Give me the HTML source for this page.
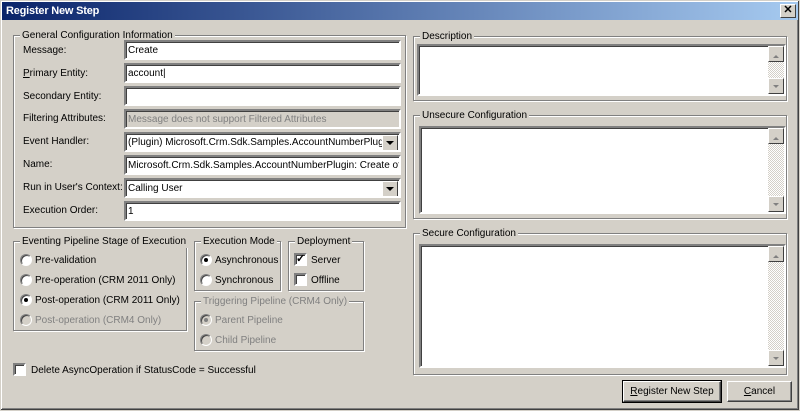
<!DOCTYPE html>
<html><head><meta charset="utf-8"><style>
*{box-sizing:border-box;margin:0;padding:0}
body{width:800px;height:411px;overflow:hidden;background:#d4d0c8;font-family:"Liberation Sans",Arial,sans-serif;font-size:10px;color:#000;position:relative}
.a{position:absolute}
.win{left:0;top:0;width:800px;height:411px;border:1px solid #d4d0c8;box-shadow:inset -1px -1px #404040,inset 1px 1px #fff,inset -2px -2px #808080}
.title{left:2px;top:2px;width:796px;height:18px;background:linear-gradient(to right,#0a246a,#a6caf0);color:#fff;font-weight:bold;font-size:11px;line-height:18px;padding-left:4px;letter-spacing:-0.2px}
.close{left:780px;top:4px;width:16px;height:14px;background:#d4d0c8;border:1px solid;border-color:#fff #404040 #404040 #fff;color:#000;font-weight:bold;font-size:11px;line-height:11px;text-align:center}
.grp{border:1px solid #808080;box-shadow:inset 1px 1px #fff,1px 1px #fff}
.lg{position:absolute;top:-7px;left:6px;background:#d4d0c8;padding:0 2px;line-height:13px;white-space:nowrap}
.lbl{line-height:12px;white-space:nowrap;margin-top:1px}
.tb{background:#fff;border:2px solid;border-color:#808080 #fff #fff #808080;box-shadow:inset 1px 1px #404040;padding:3px 2px;line-height:12px;white-space:nowrap;overflow:hidden}
.dis{background:#d4d0c8;color:#808080}
.dd{position:absolute;right:1px;top:1px;width:16px;height:16px;background:#d4d0c8;border:1px solid;border-color:#fff #404040 #404040 #fff}
.dd:after{content:"";position:absolute;left:3px;top:5px;border:4px solid transparent;border-top:4px solid #000}
.ta{background:#fff;border:2px solid;border-color:#808080 #fff #fff #808080;box-shadow:inset 1px 1px #404040}
.sb{position:absolute;right:0;top:0;bottom:0;width:16px;background:repeating-conic-gradient(#fff 0 25%,#d4d0c8 0 50%) 0 0/2px 2px}
.sbtn{position:absolute;right:0;width:16px;height:16px;background:#d4d0c8;border:1px solid;border-color:#fff #404040 #404040 #fff}
.up:after{content:"";position:absolute;left:4px;top:5px;border:3px solid transparent;border-bottom:3px solid #808080}
.dn:after{content:"";position:absolute;left:4px;top:6px;border:3px solid transparent;border-top:3px solid #808080}
.rd{width:12px;height:12px;border-radius:50%;background:#fff;border:1px solid;border-color:#808080 #fff #fff #808080;box-shadow:inset 1px 1px #404040}
.rd.on:after{content:"";position:absolute;left:3px;top:3px;width:4px;height:4px;border-radius:50%;background:#000}
.rd.gd{background:#d4d0c8}
.rd.gd.on:after{background:#808080}
.cb{width:13px;height:13px;background:#fff;border:2px solid;border-color:#808080 #fff #fff #808080;box-shadow:inset 1px 1px #404040;font-size:11px;line-height:9px;text-align:center;font-weight:bold}
.gray{color:#808080}
.btn{background:#d4d0c8;border:1px solid;border-color:#fff #404040 #404040 #fff;box-shadow:inset -1px -1px #808080;text-align:center;line-height:19px}
.btn.def{outline:1px solid #000}
</style></head><body>
<div class="a win"></div>
<div class="a title">Register New Step</div>
<div class="a close">✕</div>

<div class="a grp" style="left:13px;top:35px;width:393px;height:193px"><span class="lg">General Configuration Information</span></div>
<div class="a lbl" style="left:23px;top:44px">Message:</div>
<div class="a lbl" style="left:23px;top:67px"><u>P</u>rimary Entity:</div>
<div class="a lbl" style="left:23px;top:90px">Secondary Entity:</div>
<div class="a lbl" style="left:23px;top:112px">Filtering Attributes:</div>
<div class="a lbl" style="left:23px;top:135px">Event Handler:</div>
<div class="a lbl" style="left:23px;top:158px">Name:</div>
<div class="a lbl" style="left:23px;top:181px">Run in User's Context:</div>
<div class="a lbl" style="left:23px;top:204px">Execution Order:</div>

<div class="a tb" style="left:124px;top:40px;width:277px;height:20px">Create</div>
<div class="a tb" style="left:124px;top:63px;width:277px;height:20px">account|</div>
<div class="a tb" style="left:124px;top:86px;width:277px;height:20px"></div>
<div class="a tb dis" style="left:124px;top:109px;width:277px;height:20px">Message does not support Filtered Attributes</div>
<div class="a tb" style="left:124px;top:132px;width:277px;height:20px">(Plugin) Microsoft.Crm.Sdk.Samples.AccountNumberPlugin<div class="dd"></div></div>
<div class="a tb" style="left:124px;top:155px;width:277px;height:20px">Microsoft.Crm.Sdk.Samples.AccountNumberPlugin: Create of account</div>
<div class="a tb" style="left:124px;top:178px;width:277px;height:20px">Calling User<div class="dd"></div></div>
<div class="a tb" style="left:124px;top:201px;width:277px;height:20px">1</div>

<div class="a grp" style="left:13px;top:241px;width:174px;height:90px"><span class="lg">Eventing Pipeline Stage of Execution</span></div>
<div class="a rd" style="left:20px;top:254px"></div><div class="a lbl" style="left:35px;top:254px">Pre-validation</div>
<div class="a rd" style="left:20px;top:274px"></div><div class="a lbl" style="left:35px;top:274px">Pre-operation (CRM 2011 Only)</div>
<div class="a rd on" style="left:20px;top:294px"></div><div class="a lbl" style="left:35px;top:294px">Post-operation (CRM 2011 Only)</div>
<div class="a rd gd" style="left:20px;top:314px"></div><div class="a lbl gray" style="left:35px;top:314px">Post-operation (CRM4 Only)</div>

<div class="a grp" style="left:194px;top:241px;width:87px;height:50px"><span class="lg">Execution Mode</span></div>
<div class="a rd on" style="left:200px;top:254px"></div><div class="a lbl" style="left:215px;top:254px">Asynchronous</div>
<div class="a rd" style="left:200px;top:274px"></div><div class="a lbl" style="left:215px;top:274px">Synchronous</div>

<div class="a grp" style="left:288px;top:241px;width:76px;height:50px"><span class="lg">Deployment</span></div>
<div class="a cb" style="left:294px;top:253px">✓</div><div class="a lbl" style="left:311px;top:254px">Server</div>
<div class="a cb" style="left:294px;top:273px"></div><div class="a lbl" style="left:311px;top:274px">Offline</div>

<div class="a grp" style="left:194px;top:301px;width:170px;height:50px"><span class="lg gray">Triggering Pipeline (CRM4 Only)</span></div>
<div class="a rd gd on" style="left:200px;top:314px"></div><div class="a lbl gray" style="left:215px;top:314px">Parent Pipeline</div>
<div class="a rd gd" style="left:200px;top:334px"></div><div class="a lbl gray" style="left:215px;top:334px">Child Pipeline</div>

<div class="a cb" style="left:13px;top:363px"></div><div class="a lbl" style="left:31px;top:364px">Delete AsyncOperation if StatusCode = Successful</div>

<div class="a grp" style="left:413px;top:36px;width:374px;height:65px"><span class="lg">Description</span></div>
<div class="a ta" style="left:417px;top:44px;width:369px;height:52px"><div class="sb"><div class="sbtn up" style="top:0"></div><div class="sbtn dn" style="bottom:0"></div></div></div>

<div class="a grp" style="left:413px;top:115px;width:374px;height:104px"><span class="lg">Unsecure Configuration</span></div>
<div class="a ta" style="left:419px;top:126px;width:367px;height:88px"><div class="sb"><div class="sbtn up" style="top:0"></div><div class="sbtn dn" style="bottom:0"></div></div></div>

<div class="a grp" style="left:413px;top:233px;width:374px;height:142px"><span class="lg">Secure Configuration</span></div>
<div class="a ta" style="left:419px;top:244px;width:367px;height:124px"><div class="sb"><div class="sbtn up" style="top:0"></div><div class="sbtn dn" style="bottom:0"></div></div></div>

<div class="a btn def" style="left:623px;top:381px;width:98px;height:21px"><u>R</u>egister New Step</div>
<div class="a btn" style="left:727px;top:381px;width:65px;height:21px"><u>C</u>ancel</div>
</body></html>
